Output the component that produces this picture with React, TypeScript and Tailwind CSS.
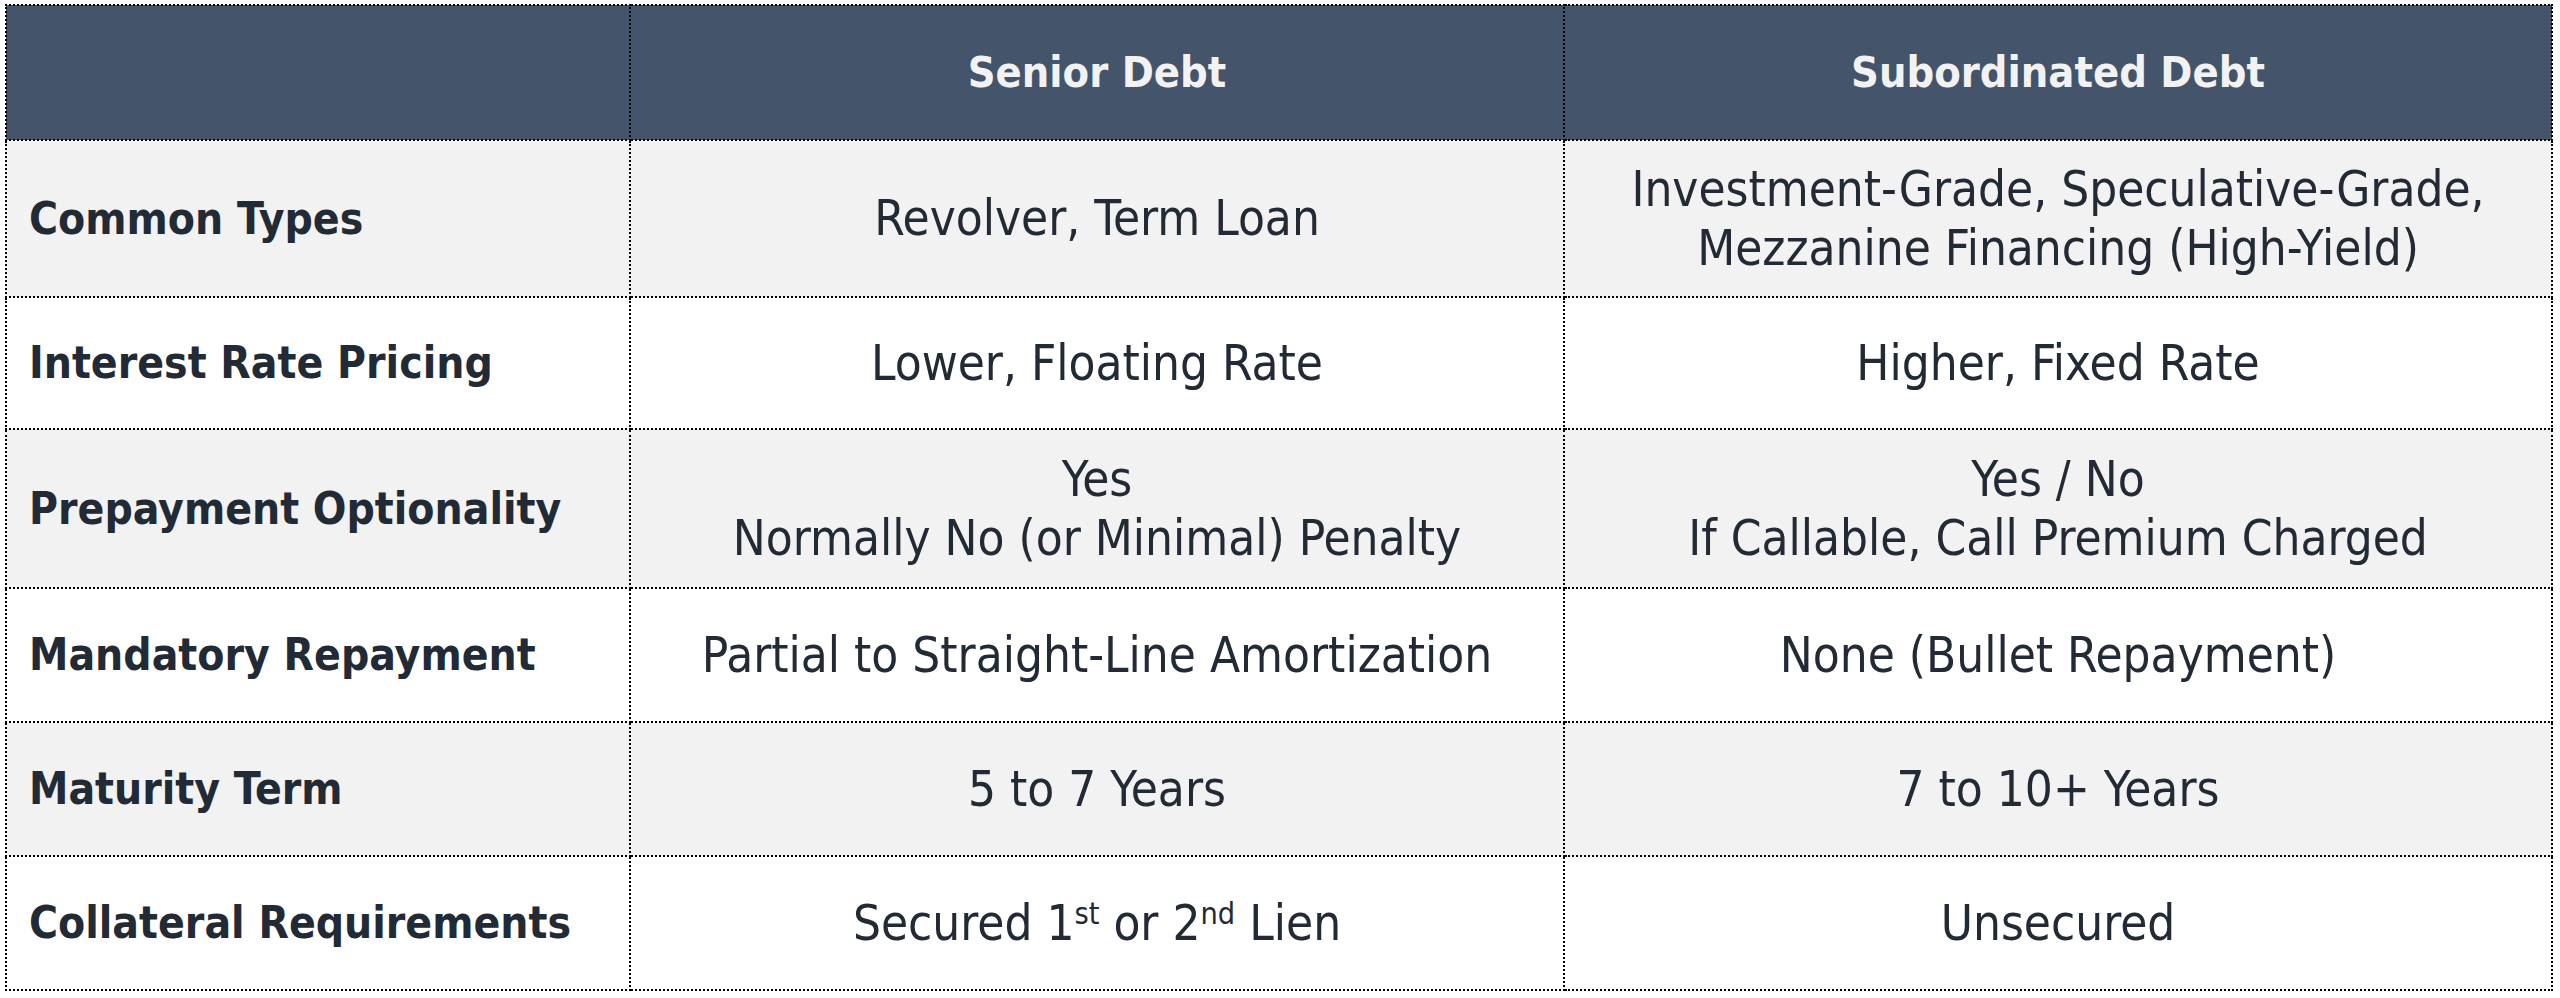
const rows: { label: string; senior: React.ReactNode; sub: React.ReactNode; h: string; shade: boolean }[] = [
  {
    label: "Common Types",
    senior: "Revolver, Term Loan",
    sub: (
      <>
        Investment-Grade, Speculative-Grade,
        <br />
        Mezzanine Financing (High-Yield)
      </>
    ),
    h: "h-[157px]",
    shade: true,
  },
  {
    label: "Interest Rate Pricing",
    senior: "Lower, Floating Rate",
    sub: "Higher, Fixed Rate",
    h: "h-[132px]",
    shade: false,
  },
  {
    label: "Prepayment Optionality",
    senior: (
      <>
        Yes
        <br />
        Normally No (or Minimal) Penalty
      </>
    ),
    sub: (
      <>
        Yes / No
        <br />
        If Callable, Call Premium Charged
      </>
    ),
    h: "h-[159px]",
    shade: true,
  },
  {
    label: "Mandatory Repayment",
    senior: "Partial to Straight-Line Amortization",
    sub: "None (Bullet Repayment)",
    h: "h-[134px]",
    shade: false,
  },
  {
    label: "Maturity Term",
    senior: "5 to 7 Years",
    sub: "7 to 10+ Years",
    h: "h-[134px]",
    shade: true,
  },
  {
    label: "Collateral Requirements",
    senior: (
      <>
        Secured 1<sup className="text-[0.62em]">st</sup> or 2<sup className="text-[0.62em]">nd</sup> Lien
      </>
    ),
    sub: "Unsecured",
    h: "h-[134px]",
    shade: false,
  },
];

const cell = "border-2 border-dotted border-black align-middle";

export default function App() {
  return (
    <div
      className="min-h-screen bg-white pl-[5px] pt-[4px] text-[#222a35]"
      style={{ fontFamily: '"DejaVu Sans Condensed", "Liberation Sans Narrow", Roboto, sans-serif' }}
    >
      <table className="border-collapse table-fixed w-[2546px]">
        <colgroup>
          <col className="w-[624px]" />
          <col className="w-[934px]" />
          <col className="w-[988px]" />
        </colgroup>
        <thead>
          <tr className="h-[135px] bg-[#44546a] text-[#f2f2f2]">
            <th className={cell}></th>
            <th className={`${cell} text-center text-[43px] font-bold`}>Senior Debt</th>
            <th className={`${cell} text-center text-[43px] font-bold`}>Subordinated Debt</th>
          </tr>
        </thead>
        <tbody>
          {rows.map((r) => (
            <tr key={r.label} className={`${r.h} ${r.shade ? "bg-[#f2f2f2]" : "bg-white"}`}>
              <td className={`${cell} pl-[22px] text-left text-[44px] font-bold`}>{r.label}</td>
              <td className={`${cell} text-center text-[49px] leading-[59px]`}>{r.senior}</td>
              <td className={`${cell} text-center text-[49px] leading-[59px]`}>{r.sub}</td>
            </tr>
          ))}
        </tbody>
      </table>
    </div>
  );
}
